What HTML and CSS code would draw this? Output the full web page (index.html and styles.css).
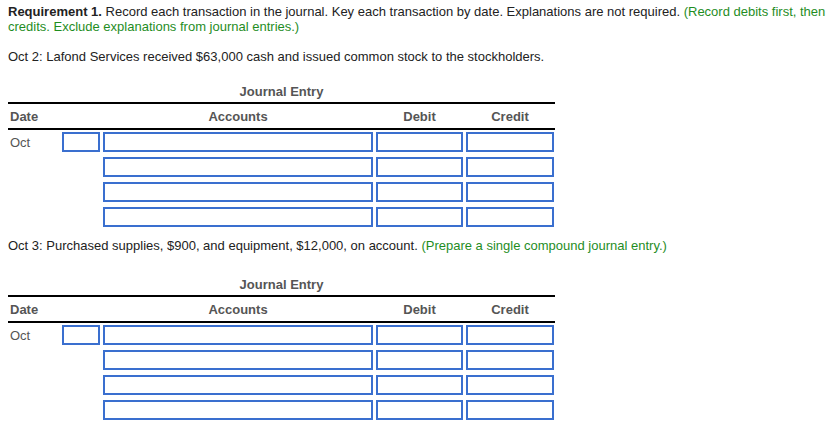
FILE: index.html
```html
<!DOCTYPE html>
<html>
<head>
<meta charset="utf-8">
<link rel="stylesheet" href="styles.css">
</head>
<body>
<div class="page">
  <p class="req"><b>Requirement 1.</b> Record each transaction in the journal. Key each transaction by date. Explanations are not required. <span class="hint">(Record debits first, then credits. Exclude explanations from journal entries.)</span></p>

  <p class="txn first">Oct 2: Lafond Services received $63,000 cash and issued common stock to the stockholders.</p>
  <div class="journal j1">
    <div class="j-title">Journal Entry</div>
    <div class="grid j-head">
      <div class="h-date">Date</div>
      <div></div>
      <div class="h-c">Accounts</div>
      <div class="h-c">Debit</div>
      <div class="h-c">Credit</div>
    </div>
    <div class="j-body">
      <div class="grid row">
        <div class="d-label">Oct</div>
        <input class="box" type="text">
        <input class="box" type="text">
        <input class="box" type="text">
        <input class="box" type="text">
      </div>
      <div class="grid row">
        <div></div><div></div>
        <input class="box" type="text">
        <input class="box" type="text">
        <input class="box" type="text">
      </div>
      <div class="grid row">
        <div></div><div></div>
        <input class="box" type="text">
        <input class="box" type="text">
        <input class="box" type="text">
      </div>
      <div class="grid row">
        <div></div><div></div>
        <input class="box" type="text">
        <input class="box" type="text">
        <input class="box" type="text">
      </div>
    </div>
  </div>

  <p class="txn second">Oct 3: Purchased supplies, $900, and equipment, $12,000, on account. <span class="hint">(Prepare a single compound journal entry.)</span></p>
  <div class="journal j2">
    <div class="j-title">Journal Entry</div>
    <div class="grid j-head">
      <div class="h-date">Date</div>
      <div></div>
      <div class="h-c">Accounts</div>
      <div class="h-c">Debit</div>
      <div class="h-c">Credit</div>
    </div>
    <div class="j-body">
      <div class="grid row">
        <div class="d-label">Oct</div>
        <input class="box" type="text">
        <input class="box" type="text">
        <input class="box" type="text">
        <input class="box" type="text">
      </div>
      <div class="grid row">
        <div></div><div></div>
        <input class="box" type="text">
        <input class="box" type="text">
        <input class="box" type="text">
      </div>
      <div class="grid row">
        <div></div><div></div>
        <input class="box" type="text">
        <input class="box" type="text">
        <input class="box" type="text">
      </div>
      <div class="grid row">
        <div></div><div></div>
        <input class="box" type="text">
        <input class="box" type="text">
        <input class="box" type="text">
      </div>
    </div>
  </div>
</div>
</body>
</html>
```

FILE: styles.css
```css
html, body {
  margin: 0;
  padding: 0;
  background: #fff;
}
body {
  font-family: "Liberation Sans", Arial, sans-serif;
  font-size: 13px;
  line-height: 15px;
  color: #222;
}
.page {
  padding: 4px 0 0 8px;
}
p {
  margin: 0;
}
.req b {
  font-weight: bold;
  color: #222;
}
.hint {
  color: #1f8d1f;
}
.txn.first {
  margin-top: 15px;
}
.txn.second {
  margin-top: 11px;
}
.journal {
  width: 547px;
}
.j1 {
  margin-top: 20px;
}
.j2 {
  margin-top: 24px;
}
.j-title {
  text-align: center;
  font-weight: bold;
  color: #555;
  padding-bottom: 3px;
  border-bottom: 2px solid #000;
}
.grid {
  display: grid;
  grid-template-columns: 51px 38px 270px 87px 88px;
  column-gap: 3px;
}
.j-head {
  padding: 5px 0 4px;
  border-bottom: 2px solid #000;
  font-weight: bold;
  color: #555;
}
.h-date {
  padding-left: 2px;
}
.h-c {
  text-align: center;
}
.j-body {
  padding-top: 2px;
  display: flex;
  flex-direction: column;
  gap: 5px;
}
.row {
  height: 20px;
  align-items: center;
}
.d-label {
  padding-left: 2px;
  color: #555;
}
.box {
  box-sizing: border-box;
  width: 100%;
  height: 20px;
  margin: 0;
  padding: 0;
  border: 2px solid #3a6fcf;
  border-radius: 0;
  background: #fff;
  outline: none;
  font: inherit;
}
```
